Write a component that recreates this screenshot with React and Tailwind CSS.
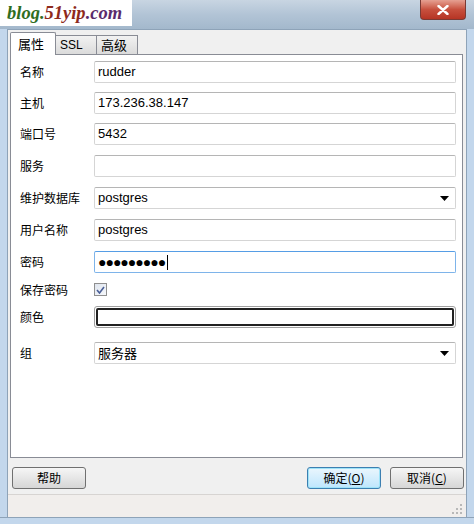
import React from 'react';

const LABEL = "font-['Noto_Sans_CJK_SC',sans-serif] text-[12px] text-black";
const VALUE = "font-['Liberation_Sans',sans-serif] text-[13px] text-black";

// Text field (Win7 style)
const Field = ({ value, focus, children }) => (
  <div
    className={`h-[22px] flex-1 flex items-center px-[3px] rounded-[2px] border bg-white ${
      focus ? 'border-[#7eb4ea] border-t-[#569de5]' : 'border-[#d5d5d5] border-t-[#b5b5b5]'
    } ${VALUE}`}
  >
    {value}
    {children}
  </div>
);

const Combo = ({ value, cjk }) => (
  <div className={`h-[22px] flex-1 flex items-center justify-between pl-[3px] pr-[6px] rounded-[2px] border border-[#d5d5d5] border-t-[#b5b5b5] bg-white ${cjk ? LABEL + ' text-[13px]' : VALUE}`}>
    <span>{value}</span>
    <svg width="9" height="5" viewBox="0 0 9 5"><path d="M0 0h9L4.5 5z" fill="#000" /></svg>
  </div>
);

const Row = ({ label, className = '', children }) => (
  <div className={`flex items-center ${className}`}>
    <div className={`w-[74px] shrink-0 ${LABEL}`}>{label}</div>
    {children}
  </div>
);

const Btn = ({ children, primary, className = '' }) => (
  <div
    className={`h-[22px] w-[74px] flex items-center justify-center rounded-[3px] border ${
      primary
        ? 'border-[#3c7fb1] bg-gradient-to-b from-[#eaf6fd] to-[#bee6fd] shadow-[inset_0_0_0_1px_#9ee3f8]'
        : 'border-[#707070] bg-gradient-to-b from-[#f6f6f6] via-[#e6e6e6] to-[#d6d6d6]'
    } ${LABEL} ${className}`}
  >
    {children}
  </div>
);

const App = () => {
  return (
    <div className="w-[474px] h-[524px] flex flex-col bg-[#c3d7ec] overflow-hidden">
      {/* Title bar */}
      <div className="h-[29px] shrink-0 flex items-start bg-gradient-to-b from-[#c8d5e2] via-[#b2c4d6] to-[#a3b8cc]">
        <div className="w-[132px] h-[26px] bg-white flex items-center pl-[7px] font-['Liberation_Serif',serif] italic font-bold text-[18.5px] leading-none">
          <span className="text-[#2f6d1f]">blog.</span>
          <span className="text-[#8e2a1c]">51yip</span>
          <span className="text-[#5a2b6c]">.com</span>
        </div>
        <div className="flex-1" />
        <div className="w-[46px] h-[20px] mr-[8px] rounded-b-[4px] border border-t-0 border-[#7a3a34] bg-gradient-to-b from-[#e5a092] via-[#c7503e] to-[#b63424] flex items-center justify-center">
          <svg width="12" height="10" viewBox="0 0 12 10">
            <path d="M1.5 1l9 8M10.5 1l-9 8" stroke="#fff" strokeWidth="2.4" strokeLinecap="round" />
          </svg>
        </div>
      </div>

      {/* Client */}
      <div className="flex-1 mx-[7px] flex flex-col bg-[#f0f0f0] border-l border-r border-t border-[#8ea3b8]">
        {/* Tabs */}
        <div className="h-[24px] pl-[2px] flex items-end">
          <div className={`h-[23px] w-[46px] -mb-px z-10 bg-white border border-b-0 border-[#898c95] rounded-t-[2px] flex items-center pl-[7px] ${LABEL} text-[13px]`}>
            属性
          </div>
          <div className={`h-[19px] w-[41px] bg-gradient-to-b from-[#f2f2f2] to-[#dbdbdb] border border-l-0 border-b-0 border-[#898c95] flex items-center pl-[4px] font-['Liberation_Sans',sans-serif] text-[12px]`}>
            SSL
          </div>
          <div className={`h-[19px] w-[41px] bg-gradient-to-b from-[#f2f2f2] to-[#dbdbdb] border border-l-0 border-b-0 border-[#898c95] flex items-center pl-[4px] ${LABEL} text-[13px]`}>
            高级
          </div>
        </div>

        {/* Panel */}
        <div className="h-[404px] ml-[2px] mr-[3px] bg-white border border-[#898c95] pl-[9px] pr-[6px] pt-[6px]">
          <Row label="名称"><Field value="rudder" /></Row>
          <Row label="主机" className="mt-[9px]"><Field value="173.236.38.147" /></Row>
          <Row label="端口号" className="mt-[9px]"><Field value="5432" /></Row>
          <Row label="服务" className="mt-[10px]"><Field value="" /></Row>
          <Row label="维护数据库" className="mt-[10px]"><Combo value="postgres" /></Row>
          <Row label="用户名称" className="mt-[10px]"><Field value="postgres" /></Row>
          <Row label="密码" className="mt-[10px]">
            <Field focus>
              <span className="tracking-[-1px] text-[14px]">●●●●●●●●●</span>
              <span className="w-px h-[15px] bg-black ml-[2px]" />
            </Field>
          </Row>
          <Row label="保存密码" className="mt-[10px] h-[13px]">
            <div className="w-[13px] h-[13px] border border-[#8f8f8f] bg-gradient-to-br from-[#dfe5ee] to-[#f6f8fb] flex items-center justify-center">
              <svg width="9" height="8" viewBox="0 0 9 8">
                <path d="M1 4l2.5 3L8 1" stroke="#4a5f97" strokeWidth="1.6" fill="none" />
              </svg>
            </div>
          </Row>
          <Row label="颜色" className="mt-[10px]">
            <div className="h-[22px] flex-1 rounded-[3px] border border-[#a0a0a0] p-px">
              <div className="h-full rounded-[2px] border-2 border-[#222] bg-white" />
            </div>
          </Row>
          <Row label="组" className="mt-[14px]"><Combo value="服务器" cjk /></Row>
        </div>

        {/* Buttons */}
        <div className="h-[36px] flex items-start pt-[9px] px-[4px]">
          <Btn>帮助</Btn>
          <div className="flex-1" />
          <Btn primary className="font-['Noto_Sans_CJK_SC',sans-serif]">
            确定(<span className="underline">O</span>)
          </Btn>
          <Btn className="ml-[9px] mr-[-2px]">
            取消(<span className="underline">C</span>)
          </Btn>
        </div>

        {/* Status bar */}
        <div className="h-[23px] border-t border-[#d7d4d2] bg-[#f1eeec] flex items-end justify-end pr-[3px] pb-[2px]">
          <svg width="11" height="11" viewBox="0 0 11 11" fill="#b8b8b8">
            <rect x="8" y="0" width="2" height="2" />
            <rect x="4" y="4" width="2" height="2" />
            <rect x="8" y="4" width="2" height="2" />
            <rect x="0" y="8" width="2" height="2" />
            <rect x="4" y="8" width="2" height="2" />
            <rect x="8" y="8" width="2" height="2" />
          </svg>
        </div>
      </div>
      <div className="h-[7px] shrink-0 border-t border-[#8ea3b8]" />
    </div>
  );
};

export default App;
